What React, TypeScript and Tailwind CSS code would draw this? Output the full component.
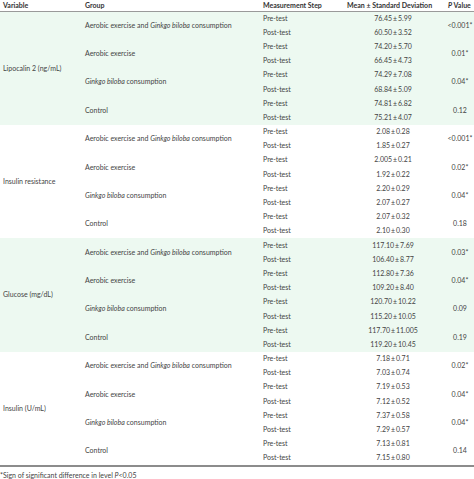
import React from 'react';

type GroupRow = { pre: string; post: string; p: string };
type VariableBlock = { name: string; shaded: boolean; rows: GroupRow[] };

const groupLabels: React.ReactNode[] = [
  <>Aerobic exercise and <i>Ginkgo biloba</i> consumption</>,
  <>Aerobic exercise</>,
  <><i>Ginkgo biloba</i> consumption</>,
  <>Control</>,
];

const pm = (a: string, b: string) => `${a}\u2009±\u2009${b}`;

const data: VariableBlock[] = [
  {
    name: 'Lipocalin 2 (ng/mL)',
    shaded: true,
    rows: [
      { pre: pm('76.45', '5.99'), post: pm('60.50', '3.52'), p: '<0.001*' },
      { pre: pm('74.20', '5.70'), post: pm('66.45', '4.73'), p: '0.01*' },
      { pre: pm('74.29', '7.08'), post: pm('68.84', '5.09'), p: '0.04*' },
      { pre: pm('74.81', '6.82'), post: pm('75.21', '4.07'), p: '0.12' },
    ],
  },
  {
    name: 'Insulin resistance',
    shaded: false,
    rows: [
      { pre: pm('2.08', '0.28'), post: pm('1.85', '0.27'), p: '<0.001*' },
      { pre: pm('2.005', '0.21'), post: pm('1.92', '0.22'), p: '0.02*' },
      { pre: pm('2.20', '0.29'), post: pm('2.07', '0.27'), p: '0.04*' },
      { pre: pm('2.07', '0.32'), post: pm('2.10', '0.30'), p: '0.18' },
    ],
  },
  {
    name: 'Glucose (mg/dL)',
    shaded: true,
    rows: [
      { pre: pm('117.10', '7.69'), post: pm('106.40', '8.77'), p: '0.03*' },
      { pre: pm('112.80', '7.36'), post: pm('109.20', '8.40'), p: '0.04*' },
      { pre: pm('120.70', '10.22'), post: pm('115.20', '10.05'), p: '0.09' },
      { pre: pm('117.70', '11.005'), post: pm('119.20', '10.45'), p: '0.19' },
    ],
  },
  {
    name: 'Insulin (U/mL)',
    shaded: false,
    rows: [
      { pre: pm('7.18', '0.71'), post: pm('7.03', '0.74'), p: '0.02*' },
      { pre: pm('7.19', '0.53'), post: pm('7.12', '0.52'), p: '0.04*' },
      { pre: pm('7.37', '0.58'), post: pm('7.29', '0.57'), p: '0.04*' },
      { pre: pm('7.13', '0.81'), post: pm('7.15', '0.80'), p: '0.14' },
    ],
  },
];

export default function App() {
  return (
    <div className="w-[474px] h-[479px] bg-white text-[#444] text-[7px] leading-none font-['Lato',sans-serif] overflow-hidden">
      <div className="border-b-2 border-[#8c8c8c]">
        <table className="w-full table-fixed border-collapse">
          <colgroup>
            <col className="w-[85px]" />
            <col className="w-[178px]" />
            <col className="w-[77px]" />
            <col className="w-[104px]" />
            <col />
          </colgroup>
          <thead>
            <tr className="h-[11px] border-b border-[#9a9a9a] text-[#333]">
              <th className="text-left pl-[3px] font-bold">Variable</th>
              <th className="text-left font-bold">Group</th>
              <th className="text-left font-bold">Measurement Step</th>
              <th className="text-left pl-[7px] font-bold">Mean ± Standard Deviation</th>
              <th className="text-left pl-[4px] font-bold whitespace-nowrap"><i>P</i> Value</th>
            </tr>
          </thead>
          {data.map(v => (
            <tbody key={v.name} className={v.shaded ? 'bg-[#edf9f1]' : 'bg-white'}>
              {v.rows.map((r, i) => (
                <React.Fragment key={i}>
                  <tr className="h-[14.2px]">
                    {i === 0 && (
                      <td rowSpan={8} className="pl-[3px] align-middle">{v.name}</td>
                    )}
                    <td rowSpan={2} className="align-middle whitespace-nowrap">{groupLabels[i]}</td>
                    <td>Pre-test</td>
                    <td className="text-center pl-[2px]">{r.pre}</td>
                    <td rowSpan={2} className="text-center pl-[2px] align-middle whitespace-nowrap">{r.p}</td>
                  </tr>
                  <tr className="h-[14.2px]">
                    <td>Post-test</td>
                    <td className="text-center pl-[2px]">{r.post}</td>
                  </tr>
                </React.Fragment>
              ))}
            </tbody>
          ))}
        </table>
      </div>
      <p className="mt-[5px] text-[7px]">*Sign of significant difference in level <i>P</i>&lt;0.05</p>
    </div>
  );
}
